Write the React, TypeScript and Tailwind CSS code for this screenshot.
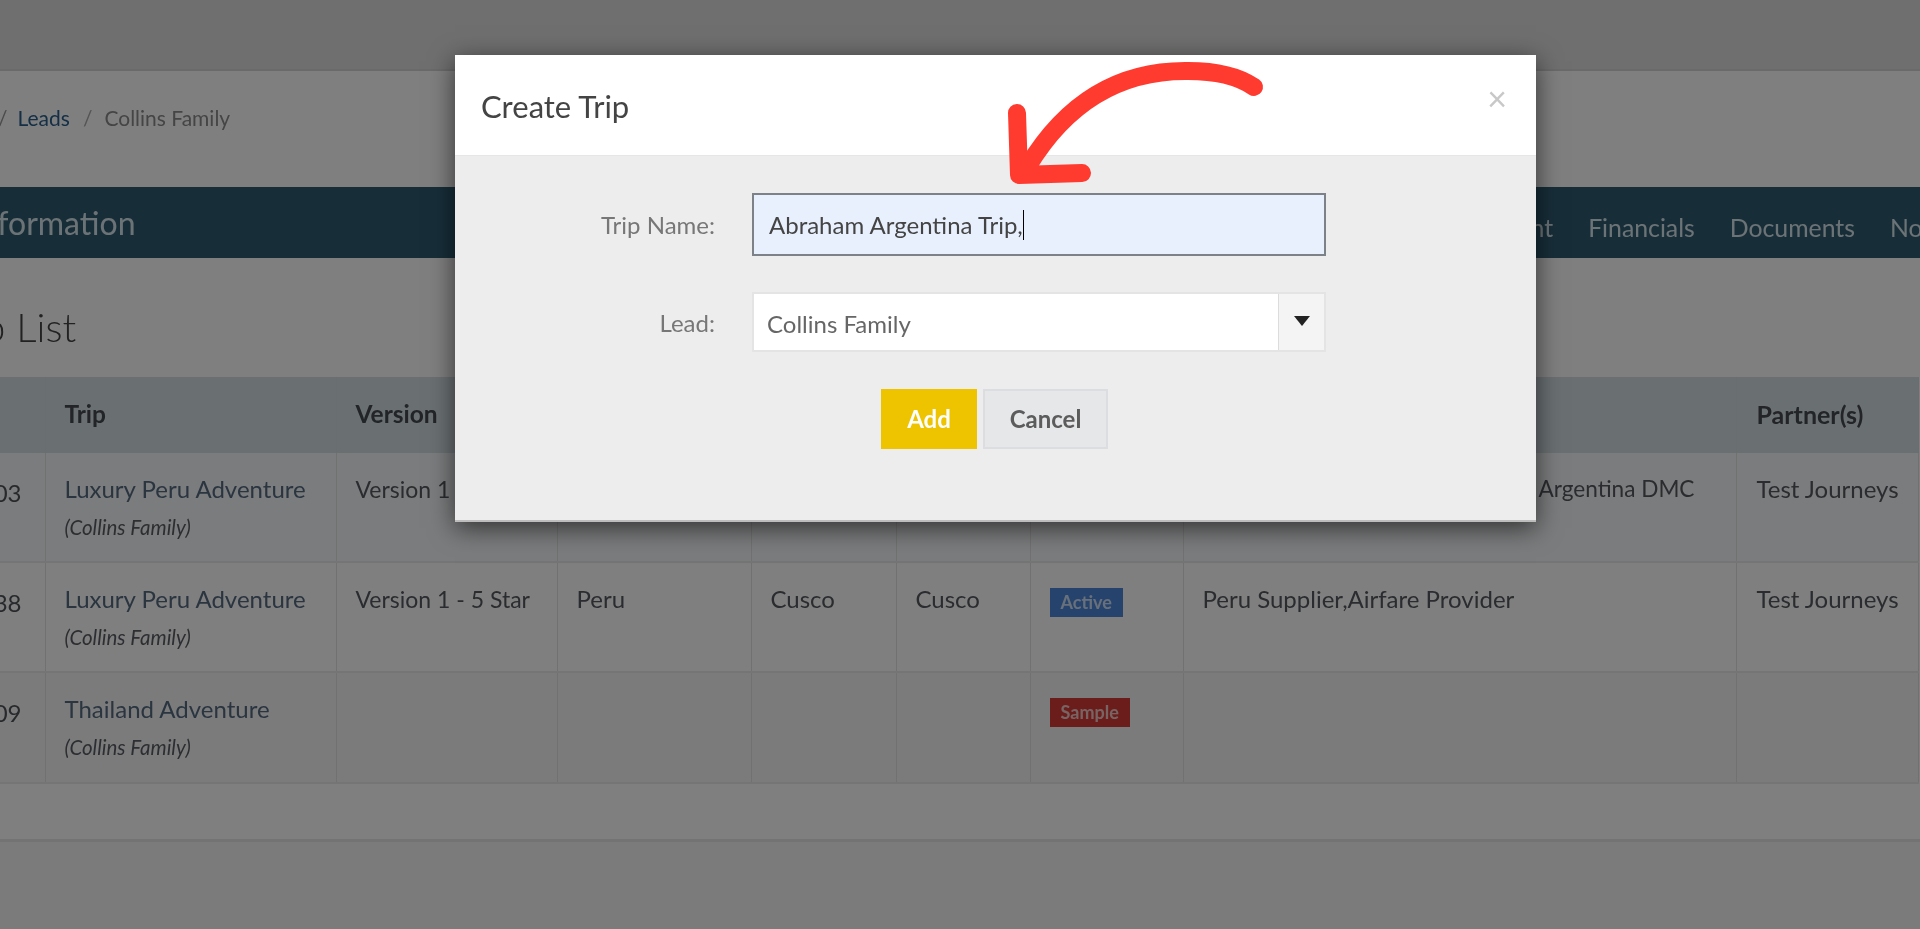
const cols = [145, 291, 221, 194, 145, 134, 153, 553, 182];

function Family() {
  return <div className="mt-[12px] text-[20.5px] leading-[24px] italic text-[#5a5c62]">(Collins Family)</div>;
}

function Row({ id, trip, version, country, start, end, badge, badgeClass, suppliers, supplierClass, partner, h, stripe }: {
  id: string; trip: string; version: string; country: string; start: string; end: string; badge: string; badgeClass: string; suppliers: string; supplierClass?: string; partner: string; h: string; stripe: string;
}) {
  const td = "border-r border-b-[2px] border-r-[#e2e2e2] border-b-[#ebebeb] align-top px-[19px] pt-[22px]";
  const text = "leading-[28px] text-[#55585e]";
  return (
    <tr className={`${h} ${stripe}`}>
      <td className={`${td} text-right !pr-[23px]`}><span className="text-[#4f5358]">{id}</span></td>
      <td className={td}>
        <div className="whitespace-nowrap leading-[28px] text-[#566a80]">{trip}</div>
        <Family />
      </td>
      <td className={`${td} whitespace-nowrap text-[23px] ${text}`}>{version}</td>
      <td className={`${td} ${text}`}>{country}</td>
      <td className={`${td} ${text}`}>{start}</td>
      <td className={`${td} ${text}`}>{end}</td>
      <td className={`${td} !pl-[19px] !pt-[19px]`}>
        <span className={`inline-flex h-[29px] items-center px-[11px] text-[18px] font-bold ${badgeClass}`}>{badge}</span>
      </td>
      <td className={`${td} whitespace-nowrap ${text} ${supplierClass ?? ""}`}>{suppliers}</td>
      <td className={`${td} whitespace-nowrap !pl-[20px] ${text}`}>{partner}</td>
    </tr>
  );
}

export default function App() {
  const th = "border-r border-[#d3dde2] px-[19px] pb-[1px] text-left text-[24.5px] font-bold text-[#45494f] whitespace-nowrap";
  return (
    <div className="relative h-[929px] w-[1920px] overflow-hidden bg-white text-[24px] blur-[0.5px] [font-family:Lato,sans-serif]">
      <div className="h-[71px] border-b-[2px] border-[#d5d5d5] bg-[#dedede]" />
      <div className="flex h-[116px] items-center pb-[22px] text-[21px]">
        <span className="-ml-[2px] text-[#999]">/</span>
        <span className="ml-[10px] text-[#2a5f8c]">Leads</span>
        <span className="ml-[13px] text-[#aaa]">/</span>
        <span className="ml-[12px] text-[#8a8a8a]">Collins Family</span>
      </div>
      <div className="flex h-[71px] items-center bg-[#2f5c72] text-[#d9e6ec]">
        <span className="-ml-[29px] text-[32px]">Information</span>
        <div className="-mr-[35px] ml-auto flex items-center gap-[35px] pt-[10px] text-[24.8px]">
          <span>Payment</span>
          <span>Financials</span>
          <span>Documents</span>
          <span>Notes</span>
        </div>
      </div>
      <div className="flex h-[119px] items-center pt-[19px]">
        <span className="-ml-[58px] text-[40px] font-light text-[#444]">Trip List</span>
      </div>
      <table className="-ml-[100px] w-[2018px] table-fixed border-collapse">
        <colgroup>
          {cols.map((w, i) => <col key={i} style={{ width: w }} />)}
        </colgroup>
        <thead>
          <tr className="h-[76px] bg-[#d5e0e4]">
            <th className={th}></th>
            <th className={th}>Trip</th>
            <th className={th}>Version</th>
            <th className={th}></th>
            <th className={th}></th>
            <th className={th}></th>
            <th className={th}></th>
            <th className={th}></th>
            <th className={`${th} !pl-[20px] !text-[25px]`}>Partner(s)</th>
          </tr>
        </thead>
        <tbody>
          <Row h="h-[109px]" stripe="bg-[#f7f8fa]" id="1003" trip="Luxury Peru Adventure" version="Version 1 - 5 Star" country="" start="" end="" badge="" badgeClass="hidden" suppliers="Argentina DMC" supplierClass="!pl-[355px] text-[22.6px]" partner="Test Journeys" />
          <Row h="h-[110px]" stripe="bg-[#fefefe]" id="1038" trip="Luxury Peru Adventure" version="Version 1 - 5 Star" country="Peru" start="Cusco" end="Cusco" badge="Active" badgeClass="bg-[#4a86d8] text-[#cfe0f6]" suppliers="Peru Supplier,Airfare Provider" partner="Test Journeys" />
          <Row h="h-[111px]" stripe="bg-[#f6f7f9]" id="1009" trip="Thailand Adventure" version="" country="" start="" end="" badge="Sample" badgeClass="bg-[#d63a36] text-[#f0c8c6]" suppliers="" partner="" />
        </tbody>
      </table>
      <div className="h-[55px]" />
      <div className="h-[91px] border-t-[3px] border-[#e6e6e6] bg-[#f6f7f8]" />

      <div className="absolute inset-0 bg-black/50" />

      <div className="absolute inset-0 flex items-start pl-[455px] pt-[55px]">
        <div className="flex h-[467px] w-[1081px] flex-col border-b-[2px] border-[#bdbdbd] bg-[#ededed] shadow-[0_6px_24px_rgba(0,0,0,0.6)]">
          <div className="flex h-[101px] shrink-0 items-center justify-between border-b border-[#e6e6e6] bg-white pl-[26px] pr-[29px]">
            <span className="pt-[2px] text-[31px] text-[#444]">Create Trip</span>
            <span className="-mt-[14px] text-[34px] leading-none text-[#c8c8c8]">×</span>
          </div>
          <div className="flex flex-col pt-[37px]">
            <div className="flex items-center">
              <label className="w-[260px] text-right text-[24px] text-[#777]">Trip Name:</label>
              <div className="ml-[37px] flex h-[63px] w-[574px] items-center border-[2px] border-[#7d8289] bg-[#e8f0fe] pl-[15px] text-[24px] text-[#444]">
                <span>Abraham Argentina Trip,</span>
                <span className="h-[30px] w-[1px] bg-black" />
              </div>
            </div>
            <div className="mt-[36px] flex items-center">
              <label className="w-[260px] pt-[2px] text-right text-[24px] text-[#777]">Lead:</label>
              <div className="ml-[37px] flex h-[60px] w-[574px] items-stretch border-[2px] border-[#e4e4e4] bg-white">
                <div className="flex flex-1 items-center pl-[13px] pt-[3px] text-[24px] text-[#666]">Collins Family</div>
                <div className="flex w-[46px] items-center justify-center border-l border-[#dcdcdc] bg-[#f4f4f4] pb-[2px]">
                  <svg width="16" height="10" viewBox="0 0 16 10"><path d="M0 0h16L8 10z" fill="#222" /></svg>
                </div>
              </div>
            </div>
            <div className="mt-[37px] flex gap-[6px] pl-[426px]">
              <button className="h-[60px] w-[96px] bg-[#eec400] text-[24px] font-bold text-white">Add</button>
              <button className="h-[60px] w-[125px] border-[2px] border-[#dcdde0] bg-[#e6e7e9] text-[24px] font-bold text-[#5c5c5c]">Cancel</button>
            </div>
          </div>
        </div>
      </div>

      <svg className="absolute left-0 top-0" width="1920" height="929" viewBox="0 0 1920 929" fill="none">
        <path d="M1028 166C1062 110 1112 70 1188 71C1215 71 1238 76 1254 87" stroke="#ff3b30" strokeWidth="18" strokeLinecap="round" />
        <path d="M1017 113L1019 175L1082 173" stroke="#ff3b30" strokeWidth="18" strokeLinecap="round" strokeLinejoin="round" />
      </svg>
    </div>
  );
}
